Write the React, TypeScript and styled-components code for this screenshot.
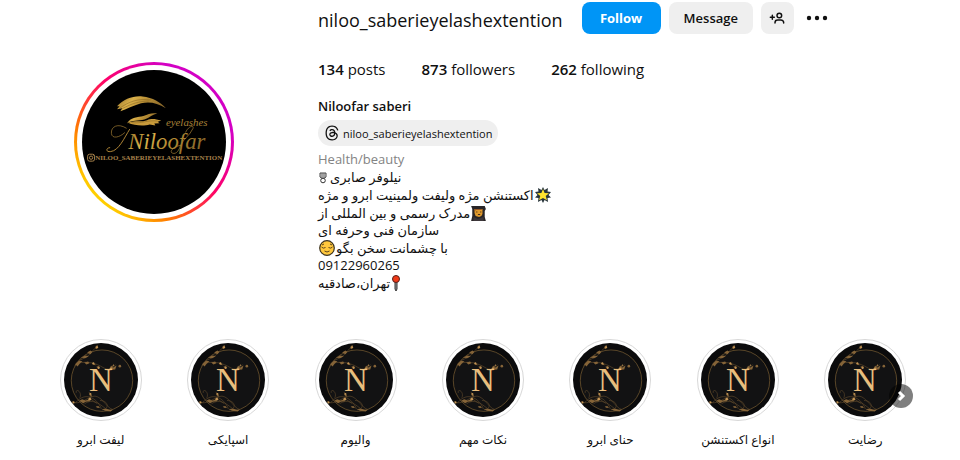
import React from "react";
import styled, { createGlobalStyle } from "styled-components";
import { FaThreads } from "react-icons/fa6";

const GlobalStyle = createGlobalStyle`
  * { box-sizing: border-box; }
  body {
    margin: 0;
    background: #fff;
    color: #101010;
    font-family: "Open Sans", "DejaVu Sans", sans-serif;
    font-size: 14px;
  }
  button { font-family: inherit; color: inherit; cursor: pointer; }
  svg { display: block; }
`;

const Page = styled.main`
  padding-top: 2px;
`;

const Header = styled.header`
  display: flex;
  align-items: flex-start;
  gap: 84px;
  padding: 0 24px 0 74px;
`;

const AvatarRing = styled.button`
  flex: none;
  width: 160px;
  height: 160px;
  margin-top: 60px;
  padding: 3px;
  border: 0;
  border-radius: 50%;
  background: linear-gradient(45deg, #ffd600 14%, #ff7a00 30%, #ff0169 54%, #d300c5 78%);
`;

const AvatarGap = styled.span`
  display: block;
  padding: 5px;
  border-radius: 50%;
  background: #fff;
`;

const Info = styled.section`
  flex: 1;
  min-width: 0;
`;

const TitleRow = styled.div`
  display: flex;
  align-items: center;
  gap: 8px;
`;

const Username = styled.h1`
  margin: 0 11px 0 0;
  padding-top: 4px;
  font-size: 18px;
  line-height: 28px;
  font-weight: 400;
`;

const Action = styled.button<{ $primary?: boolean; $square?: boolean }>`
  height: 32px;
  padding: ${(p) => (p.$square ? "0 8px" : "0 15px")};
  min-width: ${(p) => (p.$square ? "33px" : "79px")};
  border: 0;
  border-radius: 8px;
  background: ${(p) => (p.$primary ? "#0095f6" : "#efefef")};
  color: ${(p) => (p.$primary ? "#fff" : "#101010")};
  font-size: 13px;
  font-weight: ${(p) => (p.$primary ? 700 : 600)};
`;

const MoreButton = styled.button`
  padding: 4px;
  border: 0;
  background: none;
`;

const Stats = styled.ul`
  display: flex;
  gap: 36px;
  margin: 23px 0 0;
  padding: 0;
  list-style: none;
  font-size: 15px;
  line-height: 24px;
`;

const Strong = styled.strong`
  font-weight: 600;
`;

const DisplayName = styled.h2`
  margin: 16px 0 5px;
  font-size: 13px;
  line-height: 18px;
  font-weight: 600;
`;

const ThreadsLink = styled.a`
  display: inline-flex;
  align-items: center;
  gap: 3px;
  height: 26px;
  padding: 0 6px;
  border-radius: 13px;
  background: #efefef;
  color: #101010;
  font-size: 11px;
  text-decoration: none;
`;

const Category = styled.p`
  margin: 5px 0 1px;
  color: #838383;
  font-size: 13px;
  line-height: 17px;
`;

const BioLine = styled.p`
  display: flex;
  align-items: center;
  margin: 0;
  font-size: 13px;
  line-height: 17px;
`;

const Highlights = styled.nav`
  position: relative;
  display: grid;
  grid-template-columns: repeat(7, 1fr);
  margin-top: 47px;
  padding: 0 31px 0 37px;
`;

const Highlight = styled.button`
  display: flex;
  flex-direction: column;
  align-items: center;
  gap: 10px;
  padding: 0;
  border: 0;
  background: none;
  font-size: 12px;
  line-height: 18px;
`;

const Cover = styled.span`
  width: 82px;
  height: 82px;
  padding: 3px;
  border: 1px solid #d8d8d8;
  border-radius: 50%;
`;

const NextButton = styled.button`
  position: absolute;
  top: 45px;
  right: 47px;
  width: 24px;
  height: 24px;
  padding: 0;
  border: 0;
  border-radius: 50%;
  background: rgba(0, 0, 0, 0.5);
`;

const AvatarArt = () => (
  <svg viewBox="52 52 436 436" width="100%" role="img" aria-label="Niloofar eyelashes">
    <defs>
      <linearGradient id="gold" x1="0" x2="1" y1="0" y2="0.3">
        <stop offset="0" stopColor="#8d6a24" />
        <stop offset="0.35" stopColor="#d9b04a" />
        <stop offset="0.6" stopColor="#b98f35" />
        <stop offset="1" stopColor="#8c6a2b" />
      </linearGradient>
    </defs>
    <circle cx="270" cy="270" r="218" fill="#000" />
    <path d="M158 162C178 140 207 129 235 132C266 135 290 149 306 168C280 151 254 147 231 153C207 160 187 171 168 177L174 168L158 171L166 162Z" fill="url(#gold)" />
    <path d="M188 214C201 192 221 196 238 191C254 186 263 181 280 184C266 186 257 197 241 202C223 207 204 203 188 214Z" fill="url(#gold)" />
    <path d="M191 212C215 203 231 211 249 204C264 198 274 201 292 205L281 209L287 213L271 214L274 220L257 217C238 223 210 220 191 212Z" fill="#c99b3b" />
    <g fill="none" stroke="#80601f" strokeWidth="1.5">
      <path d="M164 169C195 147 223 137 260 143M174 169C202 154 226 146 254 146M201 211C231 216 251 202 281 207" />
    </g>
    <g fill="none" stroke="#ad8537" strokeLinecap="round">
      <path d="M186 228C161 212 139 223 141 244C143 262 166 256 181 242" strokeWidth="2" />
      <path d="M196 232C180 257 164 296 139 299C122 301 125 287 136 287" strokeWidth="3" />
      <path d="M366 240C374 222 392 217 388 229C379 250 357 262 350 282C343 302 333 309 323 302C318 294 335 282 351 280" strokeWidth="2" />
    </g>
    <text x="192" y="292" fontFamily="'Liberation Serif', serif" fontStyle="italic" fontSize="69" fill="url(#gold)">Niloofar</text>
    <text x="306" y="223" fontFamily="'Liberation Serif', serif" fontStyle="italic" fontSize="33" fill="#a88038">eyelashes</text>
    <g fill="none" stroke="#a7824b" strokeWidth="3">
      <rect x="69" y="307" width="21" height="21" rx="6" />
      <circle cx="79.500" cy="317.500" r="5" />
    </g>
    <circle cx="86" cy="311" r="1.500" fill="#a7824b" />
    <text x="92" y="325" fontFamily="'Liberation Serif', serif" fontSize="21" fontWeight="700" fill="#a7824b">NILOO_SABERIEYELASHEXTENTION</text>
  </svg>
);

const CoverArt = () => (
  <svg viewBox="69 37 224 224" width="100%" aria-hidden="true">
    <circle cx="181" cy="149" r="112" fill="#0b0b0c" />
    <circle cx="184" cy="151" r="93" fill="#121213" stroke="#806335" strokeWidth="2" />
    <g fill="none" stroke="#5d482a" strokeWidth="2">
      <path d="M101 108C108 84 137 88 152 65C162 50 172 53 169 43" />
      <path d="M112 98C142 91 167 99 187 111C202 120 213 116 225 103" />
      <path d="M92 216C117 224 134 207 153 199C181 190 194 231 217 239" />
      <path d="M104 218C138 177 175 213 182 237M106 188C104 172 125 185 117 203M131 221C158 203 177 222 203 242" />
      <path d="M145 185L151 208L169 220M178 211C205 211 207 239 184 239" />
    </g>
    <g fill="#856438">
      <path d="M103 101L114 91L125 92L117 99L110 108ZM120 81L134 75L144 77L133 83ZM139 66L149 60L155 64L149 71ZM163 49L170 44L173 51L166 56ZM130 96L142 93L146 98L137 102ZM153 97L162 99L165 104L156 103ZM167 109L175 106L178 112L171 114ZM209 109L216 104L217 112L228 105L224 117L212 118Z" />
      <path d="M115 212L124 207L134 211L144 208L148 213L135 215L127 219ZM146 190L152 193L154 200L148 197ZM165 229L173 228L178 234L169 233ZM184 237L198 236L210 240L217 239L210 244L193 242ZM93 214L100 213L99 219Z" />
      <circle cx="238" cy="107" r="4" />
    </g>
    <g fill="#c39555">
      <circle cx="158" cy="98" r="3" /><circle cx="174" cy="113" r="3" />
      <circle cx="211" cy="115" r="4" /><circle cx="147" cy="207" r="4" />
      <circle cx="219" cy="104" r="2" /><circle cx="149" cy="191" r="3" />
      <circle cx="98" cy="217" r="3" /><circle cx="169" cy="50" r="3" />
    </g>
    <text x="181" y="181" textAnchor="middle" fontFamily="'Liberation Serif', serif" fontSize="100" fill="#e8be7d">N</text>
  </svg>
);

const AddPerson = () => (
  <svg width="16" height="16" viewBox="0 0 24 24" fill="none" stroke="currentColor" strokeWidth="2.200" strokeLinecap="round" strokeLinejoin="round" aria-hidden="true">
    <circle cx="15.500" cy="8.250" r="3.500" />
    <path d="M22 19.500v-.447A4.050 4.050 0 0 0 17.950 15h-4.906a4.050 4.050 0 0 0-4.049 4.050v.450M5 8v6M8 11H2" />
  </svg>
);

const More = () => (
  <svg width="22" height="22" viewBox="0 0 22 22" fill="#101010" aria-hidden="true">
    <circle cx="3" cy="11" r="2.200" /><circle cx="11" cy="11" r="2.200" /><circle cx="19" cy="11" r="2.200" />
  </svg>
);

const Medal = () => (
  <svg width="12" height="17" viewBox="0 0 12 17" role="img" aria-label="medal">
    <path d="M2 4H8V8L5 10L2 8Z" fill="#ddd" stroke="#444" />
    <path d="M4 4V9M6 4V9" stroke="#666" />
    <circle cx="5" cy="11.500" r="2.300" fill="#fff" stroke="#333" />
  </svg>
);

const Burst = () => (
  <svg width="18" height="18" viewBox="0 0 16 18" role="img" aria-label="glowing star">
    <path d="M8 1L9.500 4L13 2L12.500 5.500L16 6L13.500 9L16 11.500L12.500 12L13 16L9.500 14L8 17L6.500 14L3 16L3.500 12L0 11.500L2.500 9L0 6L3.500 5.500L3 2L6.500 4Z" fill="#27343a" />
    <path d="M8 3L9.600 7L14 7.200L10.700 10L12 14.300L8 12L4 14.300L5.300 10L2 7.200L6.400 7Z" fill="#ffe32e" />
  </svg>
);

const Graduate = () => (
  <svg width="17" height="18" viewBox="0 0 15 18" preserveAspectRatio="none" role="img" aria-label="graduate">
    <path d="M1 2H13L14 5L13 7V13L14 17H1L2 12V5Z" fill="#292527" />
    <path d="M4 5H11V10L10 12L8 13L5 12L4 9Z" fill="#e09a2c" />
    <path d="M4 5H11L10 6H5L4 8Z" fill="#9a5924" />
    <path d="M5.500 8H6.500M9 8H10M7 10.500H9" stroke="#472b19" />
    <path d="M3 13L7 15L12 13V17H3Z" fill="#3d373a" />
  </svg>
);

const Face = () => (
  <svg width="18" height="18" viewBox="0 0 18 18" role="img" aria-label="relieved face">
    <circle cx="9" cy="9" r="7.300" fill="#ffc83d" stroke="#3b321e" strokeWidth="1.200" />
    <path d="M3.500 8Q5 10 7.500 8.500M10.500 8.500Q13 10 14.500 8M6.500 12Q9 14 11.500 12M4 6L6 5M12 5L14 6" fill="none" stroke="#5d441c" />
  </svg>
);

const Pin = () => (
  <svg width="12" height="18" viewBox="0 0 12 18" role="img" aria-label="pin">
    <path d="M5 7H7V15L6 17L5 15Z" fill="#999" stroke="#333" />
    <circle cx="6" cy="5" r="3.500" fill="#f03a17" stroke="#54211b" />
  </svg>
);

const bio: { text: string; before?: React.ReactNode; after?: React.ReactNode }[] = [
  { text: "نیلوفر صابری", before: <Medal /> },
  { text: "اکستنشن مژه ولیفت ولمینیت ابرو و مژه", after: <Burst /> },
  { text: "مدرک رسمی و بین المللی از", after: <Graduate /> },
  { text: "سازمان فنی وحرفه ای" },
  { text: "با چشمانت سخن بگو", before: <Face /> },
  { text: "09122960265" },
  { text: "تهران،صادقیه", after: <Pin /> },
];

const stats = [
  ["134", "posts"],
  ["873", "followers"],
  ["262", "following"],
];

const highlights = ["لیفت ابرو", "اسپایکی", "والیوم", "نکات مهم", "حنای ابرو", "انواع اکستنشن", "رضایت"];

export default function App() {
  return (
    <Page>
      <GlobalStyle />
      <Header>
        <AvatarRing aria-label="View story">
          <AvatarGap><AvatarArt /></AvatarGap>
        </AvatarRing>
        <Info>
          <TitleRow>
            <Username>niloo_saberieyelashextention</Username>
            <Action $primary>Follow</Action>
            <Action>Message</Action>
            <Action $square aria-label="Similar accounts"><AddPerson /></Action>
            <MoreButton aria-label="Options"><More /></MoreButton>
          </TitleRow>
          <Stats>
            {stats.map(([count, label]) => (
              <li key={label}><Strong>{count}</Strong> {label}</li>
            ))}
          </Stats>
          <DisplayName>Niloofar saberi</DisplayName>
          <ThreadsLink href="#threads">
            <FaThreads size={16} aria-hidden="true" />
            niloo_saberieyelashextention
          </ThreadsLink>
          <Category>Health/beauty</Category>
          {bio.map((line) => (
            <BioLine key={line.text}>
              {line.before}
              <bdi>{line.text}</bdi>
              {line.after}
            </BioLine>
          ))}
        </Info>
      </Header>
      <Highlights aria-label="Story highlights">
        {highlights.map((label) => (
          <Highlight key={label}>
            <Cover><CoverArt /></Cover>
            <bdi>{label}</bdi>
          </Highlight>
        ))}
        <NextButton aria-label="Next">
          <svg width="24" height="24" viewBox="0 0 24 24" fill="none" stroke="#fff" strokeWidth="3" aria-hidden="true">
            <path d="M10 8L14 12L10 16" />
          </svg>
        </NextButton>
      </Highlights>
    </Page>
  );
}
